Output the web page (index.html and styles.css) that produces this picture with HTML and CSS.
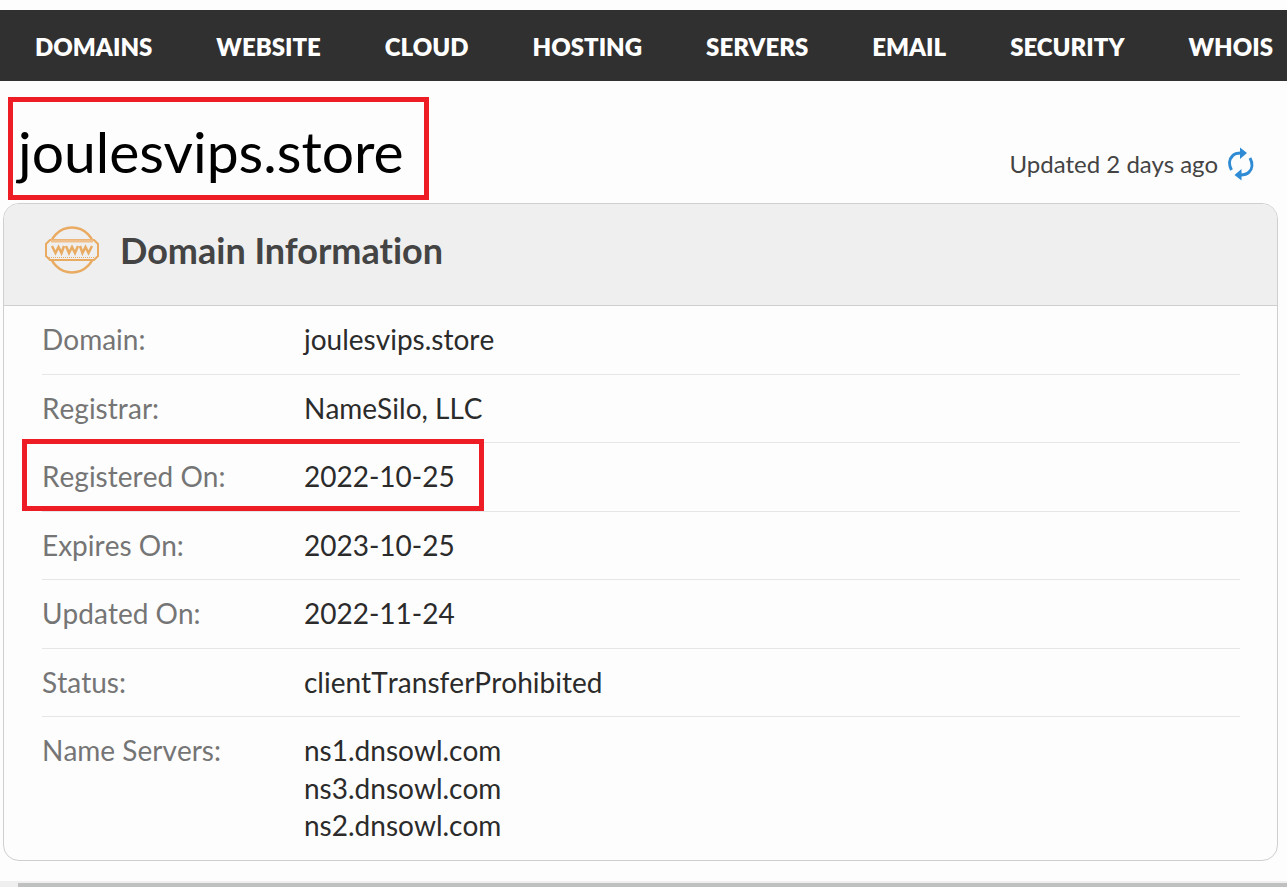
FILE: index.html
```html
<!DOCTYPE html>
<html lang="en">
  <head>
    <meta charset="UTF-8" />
    <meta name="viewport" content="width=device-width, initial-scale=1.0" />
    <title>Whois joulesvips.store</title>
    <link rel="stylesheet" href="styles.css">
  </head>
  <body>
    <nav class="navbar">
      <a href="#">DOMAINS</a>
      <a href="#">WEBSITE</a>
      <a href="#">CLOUD</a>
      <a href="#">HOSTING</a>
      <a href="#">SERVERS</a>
      <a href="#">EMAIL</a>
      <a href="#">SECURITY</a>
      <a href="#">WHOIS</a>
    </nav>

    <main class="content">
      <header class="domain-header">
        <h1 class="domain-name">joulesvips.store</h1>
        <div class="updated">
          <span>Updated 2 days ago</span>
          <button type="button" class="refresh" aria-label="Refresh">
            <svg width="26" height="34" viewBox="0 0 26 34">
              <g fill="none" stroke="#2f8bd3" stroke-width="3">
                <path d="M3.500 23C0.500 17.500 1.200 12 4.500 8.800C7 6.300 9.500 6 13 6" />
                <path d="M22 11C25 16.500 24.300 22 21 25.200C18.500 27.700 16 28 12.500 28" />
              </g>
              <path fill="#2f8bd3" d="M12 0.500L19 6L12 12Z M13.500 33.500L6.500 28L13.500 22Z" />
            </svg>
          </button>
        </div>
      </header>

      <section class="card">
        <div class="card-header">
          <svg class="www-icon" width="54" height="50" viewBox="0 0 54 50">
            <circle cx="27" cy="25" r="22.500" fill="none" stroke="#e9ab62" stroke-width="2.500" />
            <path d="M5 15H49L53 19V31L49 35H5L1 31V19Z" fill="#efefef" stroke="#e9ab62" stroke-width="2" />
            <path d="M6 16H48" stroke="#efc08c" stroke-width="3" />
            <path d="M4 32.500H50" stroke="#e9ab62" stroke-width="1" stroke-dasharray="1 1" />
            <path d="M7 21L10.500 28L13.500 22L16.500 28L19 21M21 21L24 28L27 22L30 28L33 21M35 21L37.500 28L40.500 22L43.500 28L47 21" fill="none" stroke="#e9ab62" stroke-width="2.500" />
          </svg>
          <h2>Domain Information</h2>
        </div>
        <dl class="info">
          <div class="row">
            <dt>Domain:</dt>
            <dd>joulesvips.store</dd>
          </div>
          <div class="row">
            <dt>Registrar:</dt>
            <dd>NameSilo, LLC</dd>
          </div>
          <div class="row marked">
            <dt>Registered On:</dt>
            <dd>2022-10-25</dd>
          </div>
          <div class="row">
            <dt>Expires On:</dt>
            <dd>2023-10-25</dd>
          </div>
          <div class="row">
            <dt>Updated On:</dt>
            <dd>2022-11-24</dd>
          </div>
          <div class="row">
            <dt>Status:</dt>
            <dd>clientTransferProhibited</dd>
          </div>
          <div class="row">
            <dt>Name Servers:</dt>
            <dd>ns1.dnsowl.com<br>ns3.dnsowl.com<br>ns2.dnsowl.com</dd>
          </div>
        </dl>
      </section>
    </main>

    <div class="scroll-track">
      <div class="scroll-thumb"></div>
    </div>
  </body>
</html>
```
FILE: styles.css
```css
*,
*::after {
  box-sizing: border-box;
}

body {
  margin: 0;
  padding-top: 10px;
  min-height: 100vh;
  display: flex;
  flex-direction: column;
  background-color: #fdfdfd;
  color: #2b2b2b;
  font-family: Lato, "Liberation Sans", sans-serif;
  font-variant-ligatures: none;
  overflow-x: hidden;
}

.navbar {
  display: flex;
  gap: 64px;
  padding: 22px 0 19px 35px;
  background-color: #303030;
}

.navbar a {
  color: #fff;
  font-size: 24px;
  font-weight: 800;
  line-height: 30px;
  text-decoration: none;
}

.content {
  padding: 16px 9px 0 3px;
}

.domain-header {
  display: flex;
  justify-content: space-between;
  align-items: center;
  padding: 0 24px 0 5px;
  margin-bottom: 3px;
}

.domain-name {
  margin: 0;
  padding: 13px 20px 8px 5px;
  border: 5px solid #ee1c25;
  color: #000;
  font-size: 57px;
  font-weight: 400;
  line-height: 72px;
}

.updated {
  display: flex;
  align-items: center;
  gap: 10px;
  padding-top: 30px;
  color: #444;
  font-size: 24px;
  line-height: 30px;
}

.refresh {
  display: flex;
  padding: 0;
  border: none;
  background: none;
  cursor: pointer;
}

.card {
  border: 1px solid #cfcfcf;
  border-radius: 16px;
  overflow: hidden;
}

.card-header {
  display: flex;
  align-items: center;
  gap: 21px;
  height: 102px;
  padding: 0 41px 10px;
  background-color: #efefef;
  border-bottom: 1px solid #cfcfcf;
}

.card-header h2 {
  margin: 0;
  color: #444;
  font-size: 36px;
  font-weight: 700;
  line-height: 44px;
}

.info {
  margin: 0;
  padding: 0 37px 0 38px;
  font-size: 28px;
  font-kerning: none;
  line-height: 1.34;
}

.row {
  display: flex;
  position: relative;
  padding: 15px 0;
  border-bottom: 1px solid #e6e6e6;
}

.row:last-child {
  border-bottom: none;
}

.row dt {
  width: 262px;
  color: #757575;
}

.row dd {
  margin: 0;
}

/* red frame around the registration date */
.marked::after {
  content: "";
  position: absolute;
  top: -4px;
  bottom: 0;
  left: -20px;
  width: 462px;
  border: 5px solid #ee1c25;
}

.scroll-track {
  height: 6px;
  margin-top: auto;
  padding: 2px 0 0 18px;
  background-color: #efefef;
}

.scroll-thumb {
  height: 4px;
  background-color: #bfc0c0;
}
```
